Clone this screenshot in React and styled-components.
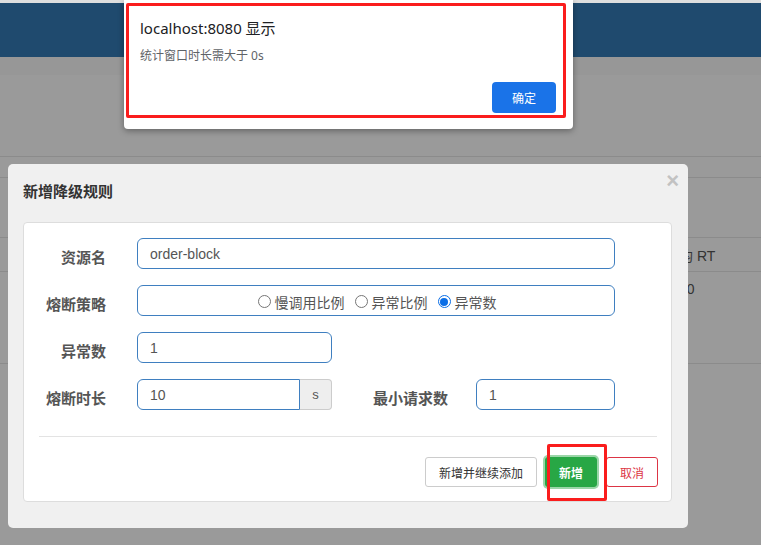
import React from 'react';
import styled, { createGlobalStyle } from 'styled-components';

const GlobalStyle = createGlobalStyle`
    html, body {
        margin: 0;
        padding: 0;
        background: #9a9a9a;
    }
    body {
        font-family: "Liberation Sans", "Noto Sans CJK SC", sans-serif;
    }
    * {
        box-sizing: border-box;
    }
`

const Page = styled.div`
    width: 761px;
    height: 545px;
    position: relative;
    overflow: hidden;
    background-color: #9a9a9a;
`

/* dimmed application behind the modal */
const TopStrip = styled.div`
    height: 3px;
    background-color: #dedede;
`
const Header = styled.div`
    height: 54px;
    background-color: #1f4a6e;
`
const SubBar = styled.div`
    height: 18px;
    background-color: #979797;
`
const Section = styled.div`
    height: 82px;
    border-bottom: 1px solid #8b8b8b;
`
const Table = styled.div`
    margin-top: 20px;
    border-top: 1px solid #8b8b8b;
    border-bottom: 1px solid #8b8b8b;
`
const TableToolbar = styled.div`
    height: 60px;
    border-bottom: 1px solid #8b8b8b;
`
const TableRow = styled.div`
    height: ${p => p.$height}px;
    display: flex;
    align-items: ${p => (p.$top ? 'flex-start' : 'center')};
    padding-top: ${p => (p.$top ? '9px' : '0')};
    border-bottom: ${p => (p.$line ? '1px solid #8b8b8b' : 'none')};
    font-size: 14px;
    color: #333;
`
const Cell = styled.div`
    flex: none;
    width: ${p => p.$width}px;
    white-space: nowrap;
    overflow: hidden;
`

/* browser alert */
const Alert = styled.div`
    position: absolute;
    left: 124px;
    top: 0;
    width: 449px;
    height: 129px;
    background-color: #ffffff;
    border-radius: 0 0 4px 4px;
    box-shadow: 0 2px 6px rgba(0, 0, 0, 0.35);
    padding: 17px 17px 16px 16px;
    display: flex;
    flex-direction: column;
    font-family: "Noto Sans", "Noto Sans CJK SC", sans-serif;
`
const AlertTitle = styled.div`
    font-size: 15px;
    line-height: 22px;
    color: #202124;
`
const AlertMessage = styled.div`
    margin-top: 8px;
    font-size: 12px;
    line-height: 18px;
    color: #5f6368;
`
const AlertActions = styled.div`
    margin-top: auto;
    display: flex;
    justify-content: flex-end;
`
const AlertButton = styled.button`
    width: 64px;
    height: 31px;
    border: none;
    border-radius: 4px;
    background-color: #1a73e8;
    color: #ffffff;
    font-size: 12px;
    font-family: inherit;
`

/* red annotation frames */
const Mark = styled.div`
    position: absolute;
    left: ${p => p.$x}px;
    top: ${p => p.$y}px;
    width: ${p => p.$w}px;
    height: ${p => p.$h}px;
    border: 3px solid #fa1d1d;
    border-radius: 2px;
    pointer-events: none;
`

/* modal */
const Modal = styled.div`
    position: absolute;
    left: 8px;
    top: 164px;
    width: 680px;
    height: 364px;
    background-color: #f0f0f0;
    border-radius: 5px;
    padding: 0 16px 26px 15px;
    display: flex;
    flex-direction: column;
`
const ModalHeader = styled.div`
    height: 58px;
    display: flex;
    align-items: center;
    justify-content: space-between;
    padding-bottom: 6px;
`
const ModalTitle = styled.div`
    font-size: 15px;
    font-weight: bold;
    color: #333;
`
const Close = styled.div`
    font-size: 22px;
    line-height: 1;
    font-weight: bold;
    color: #c2c2c2;
    margin-right: -7px;
    margin-top: -19px;
`
const Panel = styled.div`
    flex: 1;
    background-color: #ffffff;
    border: 1px solid #dddddd;
    border-radius: 4px;
    padding: 15px 13px 14px 15px;
    display: flex;
    flex-direction: column;
`
const Form = styled.div`
    display: flex;
    flex-direction: column;
    gap: 16px;
    padding-right: 43px;
`
const Row = styled.div`
    display: flex;
    align-items: center;
    height: 31px;
`
const Label = styled.div`
    flex: none;
    width: ${p => p.$width || 67}px;
    margin-right: ${p => p.$gap || 31}px;
    text-align: right;
    font-size: 15px;
    font-weight: bold;
    color: #555;
    padding-top: 5px;
    white-space: nowrap;
`
const Input = styled.div`
    flex: ${p => (p.$width ? 'none' : '1')};
    width: ${p => (p.$width ? `${p.$width}px` : 'auto')};
    height: 31px;
    border: 1px solid #3f7fc0;
    border-radius: ${p => (p.$joined ? '6px 0 0 6px' : '6px')};
    padding: 0 12px;
    display: flex;
    align-items: center;
    font-size: 14px;
    color: #555;
`
const InputGroup = styled.div`
    flex: none;
    width: 195px;
    display: flex;
`
const Addon = styled.div`
    width: 32px;
    height: 31px;
    background-color: #eeeeee;
    border: 1px solid #cccccc;
    border-left: none;
    border-radius: 0 4px 4px 0;
    display: flex;
    align-items: center;
    justify-content: center;
    font-size: 13px;
    color: #555;
`
const RadioBox = styled(Input)`
    justify-content: center;
    gap: 10px;
    padding-left: 14px;
    padding-top: 2px;
    font-size: 14px;
`
const RadioItem = styled.label`
    display: flex;
    align-items: center;
    gap: 4px;
    color: #555;
`
const RadioDot = styled.span`
    width: 13px;
    height: 13px;
    border-radius: 50%;
    border: 1px solid ${p => (p.$checked ? '#0b6ee6' : '#767676')};
    display: flex;
    align-items: center;
    justify-content: center;
    &::after {
        content: '';
        width: 8px;
        height: 8px;
        border-radius: 50%;
        background-color: ${p => (p.$checked ? '#0b6ee6' : 'transparent')};
    }
`
const Divider = styled.div`
    margin-top: 26px;
    margin-right: 1px;
    border-top: 1px solid #e3e3e3;
`
const Footer = styled.div`
    margin-top: auto;
    display: flex;
    justify-content: flex-end;
    align-items: center;
`
const Button = styled.button`
    height: 30px;
    margin-left: ${p => p.$gap || 0}px;
    padding: 0 ${p => p.$pad || 11}px;
    border-radius: 3px;
    font-size: 12px;
    font-family: "Liberation Sans", "Noto Sans CJK SC", sans-serif;
    background-color: ${p => p.$bg || '#ffffff'};
    color: ${p => p.$color || '#333'};
    border: 1px solid ${p => p.$border || '#cccccc'};
    box-shadow: ${p => (p.$glow ? '0 0 0 2px rgba(72, 180, 97, 0.55)' : 'none')};
    font-weight: ${p => (p.$glow ? 'bold' : 'normal')};
`

const Radio = ({ checked, children }) => (
    <RadioItem>
        <RadioDot $checked={checked} />
        {children}
    </RadioItem>
)

const App = () => {
    return (
        <Page>
            <GlobalStyle />
            <TopStrip />
            <Header />
            <SubBar />
            <Section />
            <Table>
                <TableToolbar />
                <TableRow $height={34} $line>
                    <Cell $width={679} />
                    <Cell $width={79}>均 RT</Cell>
                </TableRow>
                <TableRow $height={91} $top>
                    <Cell $width={679} />
                    <Cell $width={40}>10</Cell>
                </TableRow>
            </Table>

            <Modal>
                <ModalHeader>
                    <ModalTitle>新增降级规则</ModalTitle>
                    <Close>×</Close>
                </ModalHeader>
                <Panel>
                    <Form>
                        <Row>
                            <Label>资源名</Label>
                            <Input>order-block</Input>
                        </Row>
                        <Row>
                            <Label>熔断策略</Label>
                            <RadioBox>
                                <Radio>慢调用比例</Radio>
                                <Radio>异常比例</Radio>
                                <Radio checked>异常数</Radio>
                            </RadioBox>
                        </Row>
                        <Row>
                            <Label>异常数</Label>
                            <Input $width={195}>1</Input>
                        </Row>
                        <Row>
                            <Label>熔断时长</Label>
                            <InputGroup>
                                <Input $joined>10</Input>
                                <Addon>s</Addon>
                            </InputGroup>
                            <Label $width={116} $gap={28}>最小请求数</Label>
                            <Input>1</Input>
                        </Row>
                    </Form>
                    <Divider />
                    <Footer>
                        <Button $pad={13}>新增并继续添加</Button>
                        <Button $bg="#28a745" $border="#28a745" $color="#ffffff" $glow $pad={13} $gap={8}>新增</Button>
                        <Button $color="#dc3545" $border="#dc3545" $pad={13} $gap={9}>取消</Button>
                    </Footer>
                </Panel>
            </Modal>

            <Alert>
                <AlertTitle>localhost:8080 显示</AlertTitle>
                <AlertMessage>统计窗口时长需大于 0s</AlertMessage>
                <AlertActions>
                    <AlertButton>确定</AlertButton>
                </AlertActions>
            </Alert>

            <Mark $x={126} $y={3} $w={440} $h={115} />
            <Mark $x={547} $y={444} $w={60} $h={57} />
        </Page>
    );
}

export default App;
